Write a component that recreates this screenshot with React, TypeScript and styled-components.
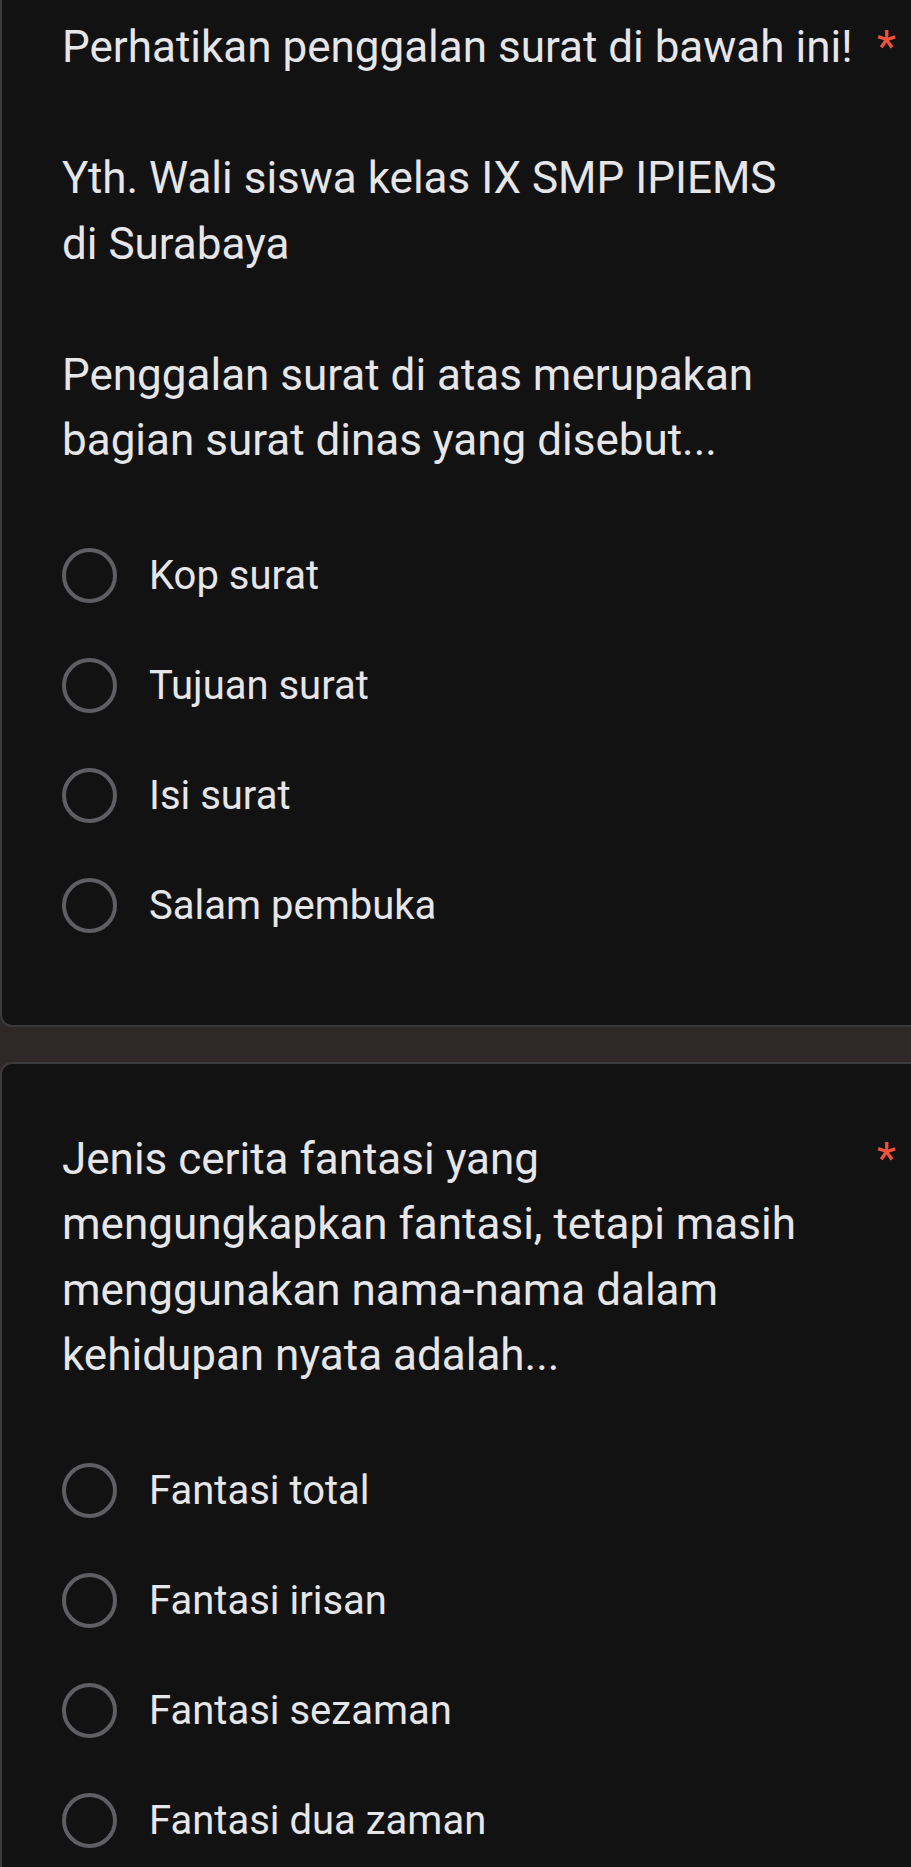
import React from "react";
import styled, { createGlobalStyle } from "styled-components";

const GlobalStyle = createGlobalStyle`
  html, body {
    margin: 0;
    padding: 0;
    background: #2e2926;
    overflow-x: hidden;
  }
  body {
    font-family: Roboto, "Noto Sans", "Liberation Sans", sans-serif;
    color: #e6e6e9;
  }
`;

const Page = styled.div`
  display: flex;
  flex-direction: column;
  gap: 35px;
  width: 911px;
  overflow: hidden;
  padding-bottom: 20px;
`;

const Card = styled.section<{ $clipTop?: boolean; $padTop: number; $padBottom: number }>`
  box-sizing: border-box;
  width: 927px;
  background: #121212;
  border: 2px solid #3b3b3d;
  border-top-width: ${(p) => (p.$clipTop ? 0 : 2)}px;
  border-radius: ${(p) => (p.$clipTop ? "0 0 12px 12px" : "12px")};
  padding: ${(p) => p.$padTop}px 29px ${(p) => p.$padBottom}px 60px;
  display: flex;
  flex-direction: column;
`;

const TitleRow = styled.div`
  display: flex;
  align-items: flex-start;
  justify-content: space-between;
  gap: 12px;
`;

const Title = styled.div<{ $maxWidth?: number }>`
  font-size: 44px;
  line-height: 65.5px;
  font-weight: 400;
  max-width: ${(p) => (p.$maxWidth ? `${p.$maxWidth}px` : "none")};
`;

const Required = styled.span`
  color: #f4533b;
  font-size: 44px;
  line-height: 65.5px;
  flex: none;
`;

const Description = styled.div`
  font-size: 44px;
  line-height: 65.5px;
  margin-top: 65.5px;
  display: flex;
  flex-direction: column;
  gap: 65.5px;
`;

const Para = styled.p`
  margin: 0;
`;

const Options = styled.div`
  display: flex;
  flex-direction: column;
  margin-top: 47px;
`;

const OptionRow = styled.label`
  display: flex;
  align-items: center;
  height: 110px;
  gap: 32px;
  cursor: pointer;
`;

const Radio = styled.span`
  box-sizing: border-box;
  width: 55px;
  height: 55px;
  border-radius: 50%;
  border: 4.5px solid #5f5f63;
  flex: none;
`;

const OptionText = styled.span`
  font-size: 40px;
  line-height: 48px;
`;

const Option = ({ label }: { label: string }) => (
  <OptionRow>
    <Radio />
    <OptionText>{label}</OptionText>
  </OptionRow>
);

export default function App() {
  return (
    <>
      <GlobalStyle />
      <Page>
        <Card $clipTop $padTop={15} $padBottom={64}>
          <TitleRow>
            <Title>Perhatikan penggalan surat di bawah ini!</Title>
            <Required>*</Required>
          </TitleRow>
          <Description>
            <Para>
              Yth. Wali siswa kelas IX SMP IPIEMS
              <br />
              di Surabaya
            </Para>
            <Para>
              Penggalan surat di atas merupakan
              <br />
              bagian surat dinas yang disebut...
            </Para>
          </Description>
          <Options>
            <Option label="Kop surat" />
            <Option label="Tujuan surat" />
            <Option label="Isi surat" />
            <Option label="Salam pembuka" />
          </Options>
        </Card>
        <Card $padTop={63} $padBottom={20}>
          <TitleRow>
            <Title $maxWidth={760}>
              Jenis cerita fantasi yang mengungkapkan fantasi, tetapi masih menggunakan nama-nama dalam kehidupan nyata adalah...
            </Title>
            <Required>*</Required>
          </TitleRow>
          <Options>
            <Option label="Fantasi total" />
            <Option label="Fantasi irisan" />
            <Option label="Fantasi sezaman" />
            <Option label="Fantasi dua zaman" />
          </Options>
        </Card>
      </Page>
    </>
  );
}
